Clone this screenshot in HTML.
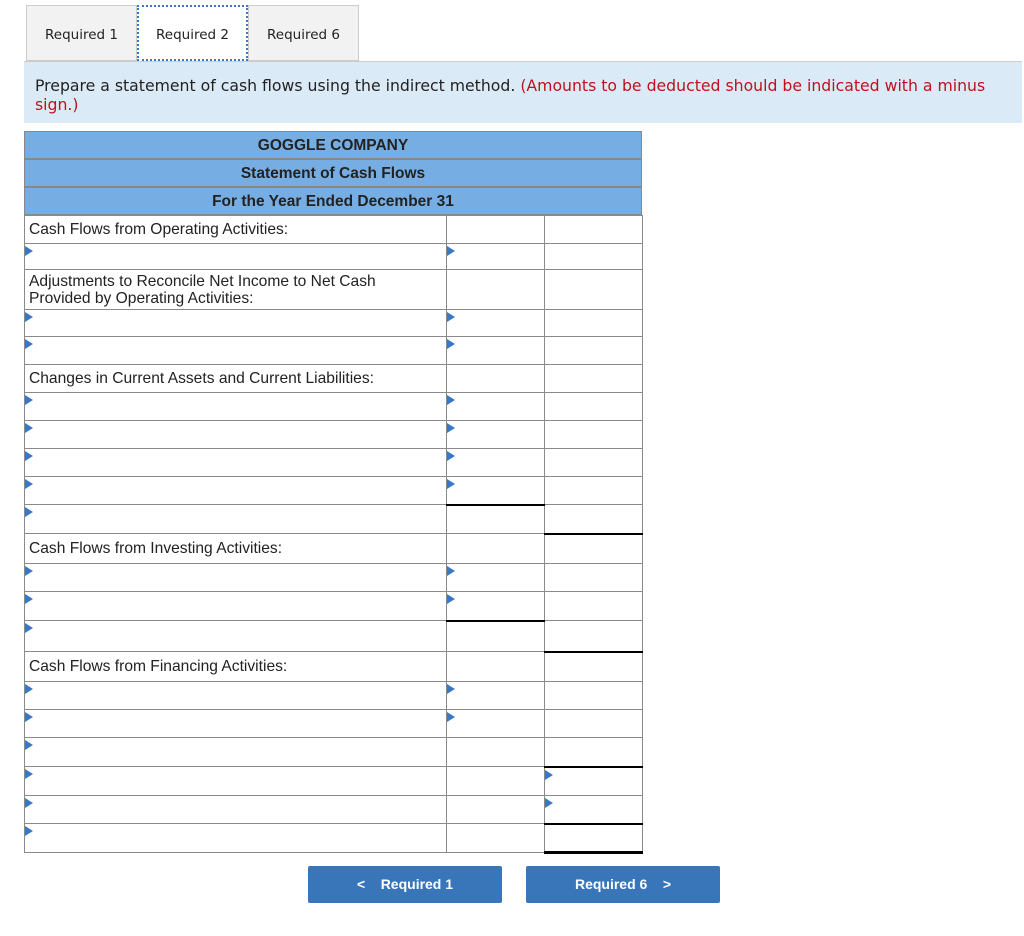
<!DOCTYPE html>
<html><head><style>
body{margin:0;width:1024px;height:936px;background:#fff;font-family:"Liberation Sans",Arial,sans-serif;position:relative;overflow:hidden}
.tabs{position:absolute;left:26px;top:5px;height:56px;display:flex}
.tab{width:111px;height:56px;padding-top:3px;background:#f2f2f2;border:1px solid #ccc;box-sizing:border-box;font-family:"DejaVu Sans",sans-serif;font-size:13.5px;color:#222;display:flex;align-items:center;justify-content:center}
.tab.act{background:#fff;border:2px dotted #3b78c4}
.inst{position:absolute;left:24px;top:61px;width:998px;height:62px;background:#dbeaf7;border-top:1px solid #ccc;box-sizing:border-box;padding:14px 20px 0 11px;font-family:"DejaVu Sans",sans-serif;font-size:15.7px;line-height:19px;color:#222}
.inst span{color:#c0101d}
.hd{position:absolute;left:24px;width:618px;height:28px;background:#76aee3;border:1px solid #888;box-sizing:border-box;text-align:center;font-weight:bold;font-size:15.5px;line-height:28px;color:#222}
table{position:absolute;left:24px;top:215px;border-collapse:collapse;width:619px;table-layout:fixed}
td{border:1px solid #8a8a8a;padding:0 4px;font-size:15.6px;color:#222;vertical-align:middle;position:relative;line-height:17px}
td.a::before{content:"";position:absolute;left:0;top:2px;border-left:8px solid #3b78c4;border-top:5px solid transparent;border-bottom:5px solid transparent}
td.bt{border-top:2px solid #000}
td.bb{border-bottom:3px solid #000}
.btn{position:absolute;top:866px;width:194px;height:37px;background:#3876b9;border-radius:2px;color:#fff;font-weight:bold;font-size:14px;line-height:37px;text-align:center}
</style></head><body>
<div class="tabs"><div class="tab">Required 1</div><div class="tab act">Required 2</div><div class="tab">Required 6</div></div>
<div class="inst">Prepare a statement of cash flows using the indirect method. <span>(Amounts to be deducted should be indicated with a minus sign.)</span></div>
<div class="hd" style="top:131px">GOGGLE COMPANY</div>
<div class="hd" style="top:159px">Statement of Cash Flows</div>
<div class="hd" style="top:187px">For the Year Ended December 31</div>
<table>
<colgroup><col style="width:421px"><col style="width:98px"><col style="width:98px"></colgroup>
<tr style="height:28px"><td>Cash Flows from Operating Activities:</td><td></td><td></td></tr>
<tr style="height:26px"><td class="a"></td><td class="a"></td><td></td></tr>
<tr style="height:40px"><td>Adjustments to Reconcile Net Income to Net Cash<br>Provided by Operating Activities:</td><td></td><td></td></tr>
<tr style="height:27px"><td class="a"></td><td class="a"></td><td></td></tr>
<tr style="height:28px"><td class="a"></td><td class="a"></td><td></td></tr>
<tr style="height:28px"><td>Changes in Current Assets and Current Liabilities:</td><td></td><td></td></tr>
<tr style="height:28px"><td class="a"></td><td class="a"></td><td></td></tr>
<tr style="height:28px"><td class="a"></td><td class="a"></td><td></td></tr>
<tr style="height:28px"><td class="a"></td><td class="a"></td><td></td></tr>
<tr style="height:28px"><td class="a"></td><td class="a"></td><td></td></tr>
<tr style="height:29px"><td class="a"></td><td class="bt"></td><td></td></tr>
<tr style="height:30px"><td>Cash Flows from Investing Activities:</td><td></td><td class="bt"></td></tr>
<tr style="height:28px"><td class="a"></td><td class="a"></td><td></td></tr>
<tr style="height:29px"><td class="a"></td><td class="a"></td><td></td></tr>
<tr style="height:31px"><td class="a"></td><td class="bt"></td><td></td></tr>
<tr style="height:30px"><td>Cash Flows from Financing Activities:</td><td></td><td class="bt"></td></tr>
<tr style="height:28px"><td class="a"></td><td class="a"></td><td></td></tr>
<tr style="height:28px"><td class="a"></td><td class="a"></td><td></td></tr>
<tr style="height:29px"><td class="a"></td><td></td><td></td></tr>
<tr style="height:29px"><td class="a"></td><td></td><td class="a bt"></td></tr>
<tr style="height:28px"><td class="a"></td><td></td><td class="a"></td></tr>
<tr style="height:29px"><td class="a"></td><td></td><td class="bt bb"></td></tr>
</table>
<div class="btn" style="left:308px">&lt;&nbsp;&nbsp;&nbsp;&nbsp;Required 1</div>
<div class="btn" style="left:526px">Required 6&nbsp;&nbsp;&nbsp;&nbsp;&gt;</div>
</body></html>
